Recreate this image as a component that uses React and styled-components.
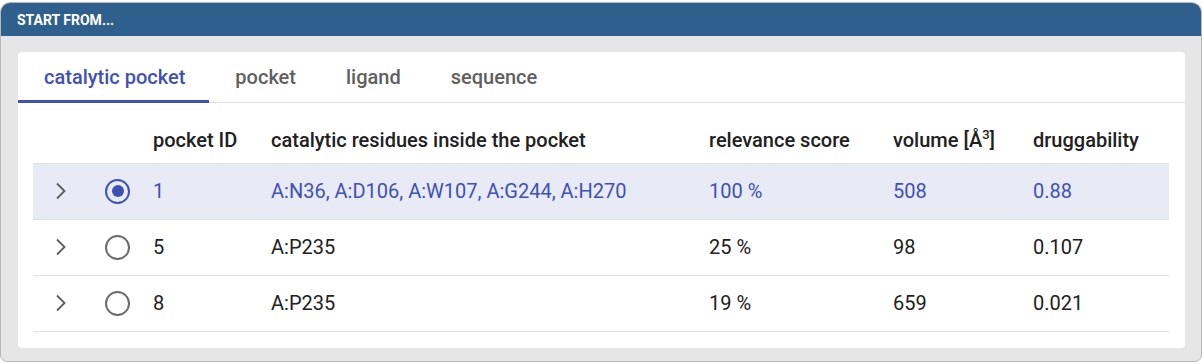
import { useState } from "react";
import styled, { createGlobalStyle } from "styled-components";

const GlobalStyle = createGlobalStyle`
  body {
    margin: 0;
    font-family: Roboto, "Liberation Sans", Arial, sans-serif;
    background: #ffffff;
  }
`;

const tabs = ["catalytic pocket", "pocket", "ligand", "sequence"];

const pockets = [
  {
    id: 1,
    residues: "A:N36, A:D106, A:W107, A:G244, A:H270",
    score: "100 %",
    volume: 508,
    druggability: "0.88",
  },
  { id: 5, residues: "A:P235", score: "25 %", volume: 98, druggability: "0.107" },
  { id: 8, residues: "A:P235", score: "19 %", volume: 659, druggability: "0.021" },
];

function App() {
  const [activeTab, setActiveTab] = useState(0);
  const [selected, setSelected] = useState(1);

  return (
    <>
      <GlobalStyle />
      <Panel>
        <PanelHeader>Start from...</PanelHeader>
        <PanelBody>
          <Card>
            <TabBar>
              {tabs.map((t, i) => (
                <Tab key={t} $active={i === activeTab} onClick={() => setActiveTab(i)}>
                  {t}
                </Tab>
              ))}
            </TabBar>
            <Table>
              <HeadRow>
                <span />
                <span />
                <HeadCell>pocket ID</HeadCell>
                <HeadCell>catalytic residues inside the pocket</HeadCell>
                <HeadCell>relevance score</HeadCell>
                <HeadCell>
                  volume [Å<sup>3</sup>]
                </HeadCell>
                <HeadCell>druggability</HeadCell>
              </HeadRow>
              {pockets.map((p) => {
                const active = p.id === selected;
                return (
                  <Row key={p.id} $active={active} onClick={() => setSelected(p.id)}>
                    <Chevron>
                      <svg width="14" height="18" viewBox="0 0 14 18">
                        <path d="M3 1.5 L10.5 9 L3 16.5" fill="none" stroke="#5c5c5c" strokeWidth="1.8" />
                      </svg>
                    </Chevron>
                    <Radio $checked={active} />
                    <Cell>{p.id}</Cell>
                    <Cell>{p.residues}</Cell>
                    <Cell>{p.score}</Cell>
                    <Cell>{p.volume}</Cell>
                    <Cell>{p.druggability}</Cell>
                  </Row>
                );
              })}
            </Table>
          </Card>
        </PanelBody>
      </Panel>
    </>
  );
}

const Panel = styled.div`
  margin-top: 2px;
  height: 360px;
  box-sizing: border-box;
  border: 1px solid #b8b8b8;
  border-radius: 10px 10px 7px 7px;
  overflow: hidden;
  display: flex;
  flex-direction: column;
  background: #e6e6e6;
`;

const PanelHeader = styled.div`
  height: 33px;
  flex: none;
  display: flex;
  align-items: center;
  padding-left: 16px;
  background: #2f5f8d;
  color: #ffffff;
  font-size: 14px;
  font-weight: 700;
  text-transform: uppercase;
`;

const PanelBody = styled.div`
  flex: 1;
  padding: 16px 16px 14px 17px;
  display: flex;
  flex-direction: column;
`;

const Card = styled.div`
  flex: 1;
  background: #ffffff;
  border-radius: 4px;
  display: flex;
  flex-direction: column;
`;

const TabBar = styled.div`
  display: flex;
  height: 50px;
  border-bottom: 1px solid #e0e0e0;
`;

const Tab = styled.div`
  display: flex;
  align-items: center;
  padding: 0 24px 1px 26px;
  font-size: 20px;
  font-weight: 500;
  color: ${(p) => (p.$active ? "#3f51b5" : "#5f5f5f")};
  box-shadow: ${(p) => (p.$active ? "inset 0 -3px 0 #3f51b5" : "none")};
  margin-bottom: -1px;
  cursor: pointer;
`;

const Table = styled.div`
  margin: 15px 16px 16px 15px;
  font-size: 20px;
`;

const columns = "54px 66px 118px 438px 184px 140px 1fr";

const HeadRow = styled.div`
  display: grid;
  grid-template-columns: ${columns};
  align-items: center;
  height: 44px;
  padding-bottom: 1px;
  border-bottom: 1px solid #e0e0e0;
`;

const HeadCell = styled.div`
  font-weight: 500;
  color: #212121;

  sup {
    font-size: 13px;
    line-height: 0;
  }
`;

const Row = styled.div`
  display: grid;
  grid-template-columns: ${columns};
  align-items: center;
  height: 54px;
  padding-bottom: 1px;
  border-bottom: 1px solid #e0e0e0;
  background: ${(p) => (p.$active ? "#e8eaf6" : "transparent")};
  color: ${(p) => (p.$active ? "#3f51b5" : "#212121")};
  cursor: pointer;
`;

const Chevron = styled.div`
  display: flex;
  justify-content: center;
  padding-left: 1px;
`;

const Radio = styled.div`
  width: 25px;
  height: 25px;
  margin-left: 18px;
  box-sizing: border-box;
  border-radius: 50%;
  border: 2px solid ${(p) => (p.$checked ? "#3f51b5" : "#6b6b6b")};
  display: flex;
  align-items: center;
  justify-content: center;

  &::after {
    content: "";
    width: 12px;
    height: 12px;
    border-radius: 50%;
    background: #3f51b5;
    display: ${(p) => (p.$checked ? "block" : "none")};
  }
`;

const Cell = styled.div`
  white-space: nowrap;
`;

export default App;
